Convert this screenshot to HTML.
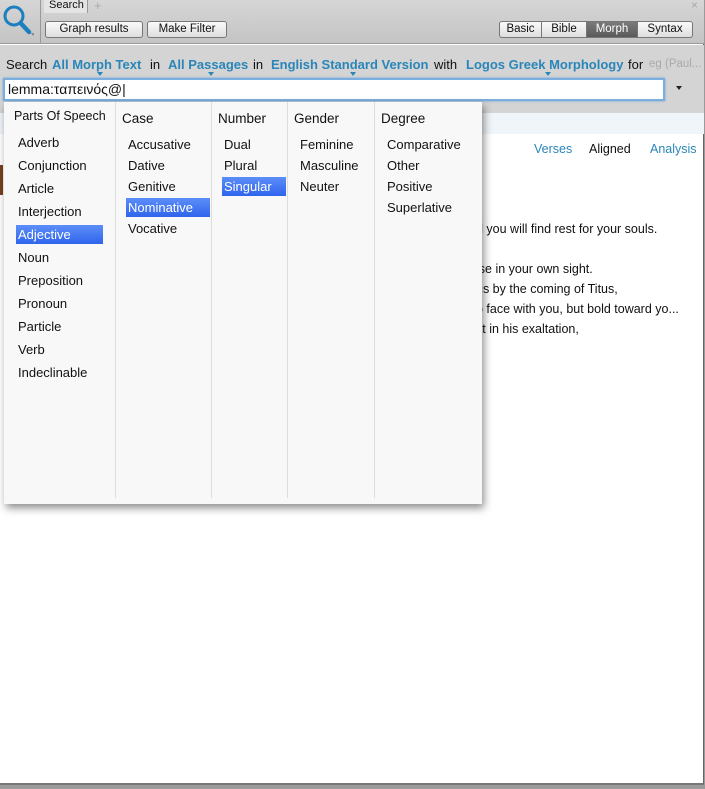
<!DOCTYPE html>
<html><head><meta charset="utf-8"><style>
*{margin:0;padding:0;box-sizing:border-box}
body{width:705px;height:789px;background:#9a9a9a;font-family:"Liberation Sans","DejaVu Sans",sans-serif;font-size:13px;color:#111;position:relative;overflow:hidden}
.win{position:absolute;left:0;top:0;width:704px;height:785px;background:#fff;border-right:1px solid #666;border-bottom:2px solid #777}
.top{position:absolute;left:0;top:0;width:704px;height:44px;background:linear-gradient(#d6d6d6,#c4c4c4);border-bottom:1px solid #9a9a9a}
.tab{position:absolute;left:44px;top:0;width:44px;height:13px;background:#e4e4e4;border-right:1px solid #999;font-size:11px;padding-left:5px;line-height:11px}
.btn{position:absolute;top:21px;height:17px;border:1px solid #777;border-radius:3px;background:linear-gradient(#fafafa,#dedede);font-size:11.5px;line-height:15px;text-align:center}
.seg{position:absolute;top:21px;height:17px;border:1px solid #777;font-size:11.5px;line-height:15px;text-align:center;background:linear-gradient(#fafafa,#dedede)}
.bar{position:absolute;left:0;top:45px;width:704px;height:68px;background:#d4d4d4}
.s{position:absolute;top:57px;font-size:13px;white-space:nowrap}
b.s{color:#2a86b8;font-weight:bold}
b.s:after{content:"";position:absolute;left:50%;bottom:-7px;border:3px solid transparent;border-top:4px solid #2a86b8}
.inp{position:absolute;left:3px;top:78px;width:662px;height:23px;background:#fff;border:2px solid #7aaede;box-shadow:0 0 2px #6aa0d8;font-size:14px;padding-left:3px;line-height:18px}
.band{position:absolute;left:0;top:113px;width:704px;height:21px;background:#f0f5f9}
.pop{position:absolute;left:4px;top:102px;width:478px;height:402px;background:#f8f8f8;box-shadow:2px 4px 8px rgba(0,0,0,.45)}
.col{position:absolute;top:0;height:396px;border-right:1px solid #ddd}
.h{position:absolute;font-size:13.5px}
.it{position:absolute;font-size:13px;height:19px;line-height:19px;padding-left:2px}
.sel{background:linear-gradient(#5c8ef8,#2f64ec);color:#fff}
.txt{position:absolute;font-size:12.5px;white-space:nowrap}
</style></head><body>
<div class="win">
<div class="top">
<svg style="position:absolute;left:2px;top:3px" width="32" height="34" viewBox="0 0 32 34"><circle cx="12" cy="13" r="9" fill="none" stroke="#1e7fc0" stroke-width="3"/><line x1="18.5" y1="20" x2="27" y2="29" stroke="#1e7fc0" stroke-width="4.5" stroke-linecap="round"/><path d="M29 30 l4 0 l-2 3z" fill="#888"/></svg>
<div style="position:absolute;left:40px;top:0;width:1px;height:44px;background:#999"></div>
<div class="tab">Search</div>
<div style="position:absolute;left:94px;top:-2px;color:#aaa;font-size:13px">+</div>
<div style="position:absolute;left:691px;top:-2px;color:#aaa;font-size:12px">×</div>
<div class="btn" style="left:45px;width:98px">Graph results</div>
<div class="btn" style="left:147px;width:80px">Make Filter</div>
<div class="seg" style="left:499px;width:43px;border-radius:3px 0 0 3px">Basic</div>
<div class="seg" style="left:541px;width:46px">Bible</div>
<div class="seg" style="left:586px;width:52px;background:linear-gradient(#7a7a7a,#5a5a5a);color:#fff">Morph</div>
<div class="seg" style="left:637px;width:56px;border-radius:0 3px 3px 0">Syntax</div>
</div>
<div class="bar"></div>
<span class="s" style="left:6px">Search</span>
<b class="s" style="left:52px">All Morph Text</b>
<span class="s" style="left:150px">in</span>
<b class="s" style="left:168px">All Passages</b>
<span class="s" style="left:253px">in</span>
<b class="s" style="left:271px">English Standard Version</b>
<span class="s" style="left:434px">with</span>
<b class="s" style="left:466px">Logos Greek Morphology</b>
<span class="s" style="left:628px">for</span>
<span class="s" style="left:649px;top:58px;color:#aaa;font-size:11.5px">eg (Paul...</span>
<div class="inp">lemma:ταπεινός@|</div>
<div style="position:absolute;left:676px;top:86px;border:3px solid transparent;border-top:4px solid #222"></div>
<div class="band"></div>
<div style="position:absolute;left:0;top:165px;width:3px;height:30px;background:#7a4020"></div>
<div class="txt" style="left:534px;top:142px;color:#2a86b8">Verses</div>
<div class="txt" style="left:589px;top:142px">Aligned</div>
<div class="txt" style="left:650px;top:142px;color:#2a86b8">Analysis</div>
<div class="txt" style="left:476px;top:222px">d you will find rest for your souls.</div>
<div class="txt" style="left:476px;top:262px">ise in your own sight.</div>
<div class="txt" style="left:476px;top:282px">us by the coming of Titus,</div>
<div class="txt" style="left:476px;top:302px">o face with you, but bold toward yo...</div>
<div class="txt" style="left:476px;top:322px">st in his exaltation,</div>
<div class="pop">
<div class="col" style="left:0;width:112px">
<div class="h" style="left:10px;top:7px;font-size:12.5px">Parts Of Speech</div>
<div class="it" style="left:12px;top:31px">Adverb</div>
<div class="it" style="left:12px;top:54px">Conjunction</div>
<div class="it" style="left:12px;top:77px">Article</div>
<div class="it" style="left:12px;top:100px">Interjection</div>
<div class="it sel" style="left:12px;top:123px;width:87px">Adjective</div>
<div class="it" style="left:12px;top:146px">Noun</div>
<div class="it" style="left:12px;top:169px">Preposition</div>
<div class="it" style="left:12px;top:192px">Pronoun</div>
<div class="it" style="left:12px;top:215px">Particle</div>
<div class="it" style="left:12px;top:238px">Verb</div>
<div class="it" style="left:12px;top:261px">Indeclinable</div>
</div>
<div class="col" style="left:112px;width:96px">
<div class="h" style="left:6px;top:9px">Case</div>
<div class="it" style="left:10px;top:33px">Accusative</div>
<div class="it" style="left:10px;top:54px">Dative</div>
<div class="it" style="left:10px;top:75px">Genitive</div>
<div class="it sel" style="left:10px;top:96px;width:84px">Nominative</div>
<div class="it" style="left:10px;top:117px">Vocative</div>
</div>
<div class="col" style="left:208px;width:76px">
<div class="h" style="left:6px;top:9px">Number</div>
<div class="it" style="left:10px;top:33px">Dual</div>
<div class="it" style="left:10px;top:54px">Plural</div>
<div class="it sel" style="left:10px;top:75px;width:64px">Singular</div>
</div>
<div class="col" style="left:284px;width:87px">
<div class="h" style="left:6px;top:9px">Gender</div>
<div class="it" style="left:10px;top:33px">Feminine</div>
<div class="it" style="left:10px;top:54px">Masculine</div>
<div class="it" style="left:10px;top:75px">Neuter</div>
</div>
<div class="col" style="left:371px;width:107px;border:none">
<div class="h" style="left:6px;top:9px">Degree</div>
<div class="it" style="left:10px;top:33px">Comparative</div>
<div class="it" style="left:10px;top:54px">Other</div>
<div class="it" style="left:10px;top:75px">Positive</div>
<div class="it" style="left:10px;top:96px">Superlative</div>
</div>
</div>
</div>
</body></html>
